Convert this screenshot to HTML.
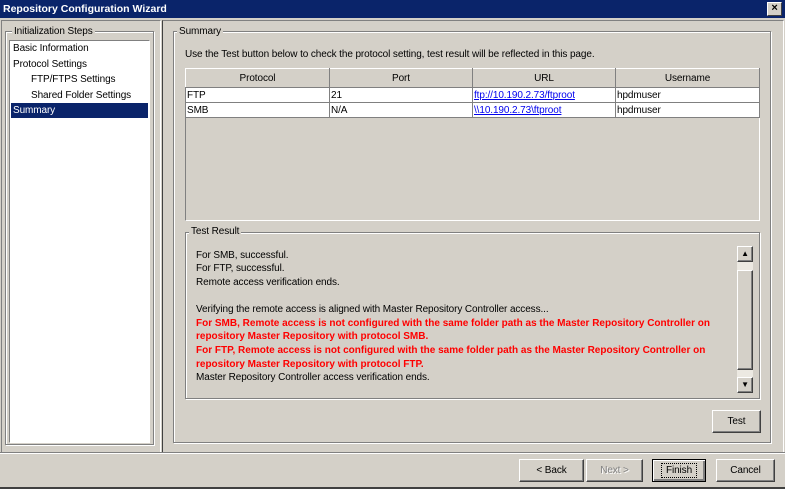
<!DOCTYPE html>
<html><head><style>
*{margin:0;padding:0;box-sizing:border-box}
body{width:785px;height:489px;background:#d4d0c8;font-family:"Liberation Sans",Arial,sans-serif;font-size:10px;letter-spacing:-0.1px;color:#000;position:relative;overflow:hidden}
.a{position:absolute}
.title{left:0;top:0;width:785px;height:18px;background:#0a246a;color:#fff;font-weight:bold;font-size:10.5px;padding:2px 3px;line-height:14px;letter-spacing:0}
.close{right:3px;top:2px;width:15px;height:14px;background:#d4d0c8;border:1px solid;border-color:#fff #404040 #404040 #fff;color:#000;font-size:11px;text-align:center;line-height:11px;font-weight:bold}
.etch{border:1px solid #808080;box-shadow:1px 1px 0 #fff, inset 1px 1px 0 #fff}
.legend{background:#d4d0c8;padding:0 2px;line-height:12px}
.list{background:#fff;border:1px solid;border-color:#808080 #fff #fff #808080}
.item{position:absolute;left:2px;height:15px;line-height:15px}
table{border-collapse:collapse;position:absolute;left:185px;top:68px;width:574px;table-layout:fixed}
th{background:#d4d0c8;font-weight:normal;height:19px;border:1px solid #808080;border-top-color:#fff;border-left-color:#fff;text-align:center}
td{background:#fff;height:15px;border:1px solid #808080;padding-left:1px;white-space:nowrap;overflow:hidden}
a{color:#00e;text-decoration:underline}
.btn{position:absolute;height:23px;border:1px solid;border-color:#fff #404040 #404040 #fff;box-shadow:inset -1px -1px 0 #808080;text-align:center;line-height:21px;background:#d4d0c8}
.ln{position:absolute;left:196px;white-space:nowrap;line-height:14px}
.r{color:#f00;font-weight:bold;letter-spacing:0}
</style></head><body>
<div class="a title">Repository Configuration Wizard</div>
<div class="a close">×</div>
<div class="a" style="left:1px;top:20px;width:160px;height:433px;border:1px solid;border-color:#808080 #fff #fff #808080"></div>
<div class="a" style="left:162px;top:20px;width:622px;height:433px;border:1px solid;border-color:#808080 #fff #fff #404040"></div>
<div class="a" style="left:0;top:453px;width:785px;height:1px;background:#fff"></div>
<div class="a" style="left:0;top:452px;width:785px;height:1px;background:#808080"></div>
<div class="a" style="left:0;top:487px;width:785px;height:2px;background:#404040"></div>
<div class="a etch" style="left:5px;top:31px;width:149px;height:414px"></div>
<div class="a legend" style="left:12px;top:26px">Initialization Steps</div>
<div class="a list" style="left:9px;top:40px;width:141px;height:403px"></div>
<div class="a item" style="left:13px;top:41px">Basic Information</div>
<div class="a item" style="left:13px;top:57px">Protocol Settings</div>
<div class="a item" style="left:31px;top:72px">FTP/FTPS Settings</div>
<div class="a item" style="left:31px;top:88px">Shared Folder Settings</div>
<div class="a" style="left:11px;top:103px;width:137px;height:15px;background:#0a246a"></div>
<div class="a item" style="left:13px;top:103px;color:#fff">Summary</div>
<div class="a etch" style="left:173px;top:31px;width:598px;height:412px"></div>
<div class="a legend" style="left:177px;top:26px">Summary</div>
<div class="a" style="left:185px;top:49px">Use the Test button below to check the protocol setting, test result will be reflected in this page.</div>
<div class="a" style="left:185px;top:68px;width:575px;height:153px;background:#d4d0c8;border:1px solid;border-color:#808080 #fff #fff #808080"></div>
<table><colgroup><col style="width:144px"><col style="width:143px"><col style="width:143px"><col style="width:144px"></colgroup>
<tr><th>Protocol</th><th>Port</th><th>URL</th><th>Username</th></tr>
<tr><td>FTP</td><td>21</td><td><a>ftp://10.190.2.73/ftproot</a></td><td>hpdmuser</td></tr>
<tr><td>SMB</td><td>N/A</td><td><a>\\10.190.2.73\ftproot</a></td><td>hpdmuser</td></tr>
</table>
<div class="a etch" style="left:185px;top:232px;width:575px;height:167px"></div>
<div class="a legend" style="left:189px;top:226px">Test Result</div>
<div class="ln" style="top:249px">For SMB, successful.</div>
<div class="ln" style="top:262px">For FTP, successful.</div>
<div class="ln" style="top:276px">Remote access verification ends.</div>
<div class="ln" style="top:303px">Verifying the remote access is aligned with Master Repository Controller access...</div>
<div class="ln r" style="top:317px">For SMB, Remote access is not configured with the same folder path as the Master Repository Controller on</div>
<div class="ln r" style="top:330px">repository Master Repository with protocol SMB.</div>
<div class="ln r" style="top:344px">For FTP, Remote access is not configured with the same folder path as the Master Repository Controller on</div>
<div class="ln r" style="top:358px">repository Master Repository with protocol FTP.</div>
<div class="ln" style="top:371px">Master Repository Controller access verification ends.</div>
<div class="a" style="left:737px;top:246px;width:16px;height:147px;background:#ece9e2"></div>
<div class="btn" style="left:737px;top:246px;width:16px;height:16px;line-height:14px;font-size:8px">▲</div>
<div class="btn" style="left:737px;top:270px;width:16px;height:100px"></div>
<div class="btn" style="left:737px;top:377px;width:16px;height:16px;line-height:14px;font-size:8px">▼</div>
<div class="btn" style="left:712px;top:410px;width:49px">Test</div>
<div class="btn" style="left:519px;top:459px;width:65px">&lt; Back</div>
<div class="btn" style="left:586px;top:459px;width:57px;color:#808080;text-shadow:1px 1px 0 #fff">Next &gt;</div>
<div class="btn" style="left:652px;top:459px;width:54px;border-color:#000;box-shadow:inset 1px 1px 0 #fff,inset -2px -2px 0 #808080"><span style="outline:1px dotted #000;padding:1px 4px">Finish</span></div>
<div class="btn" style="left:716px;top:459px;width:59px">Cancel</div>
</body></html>
